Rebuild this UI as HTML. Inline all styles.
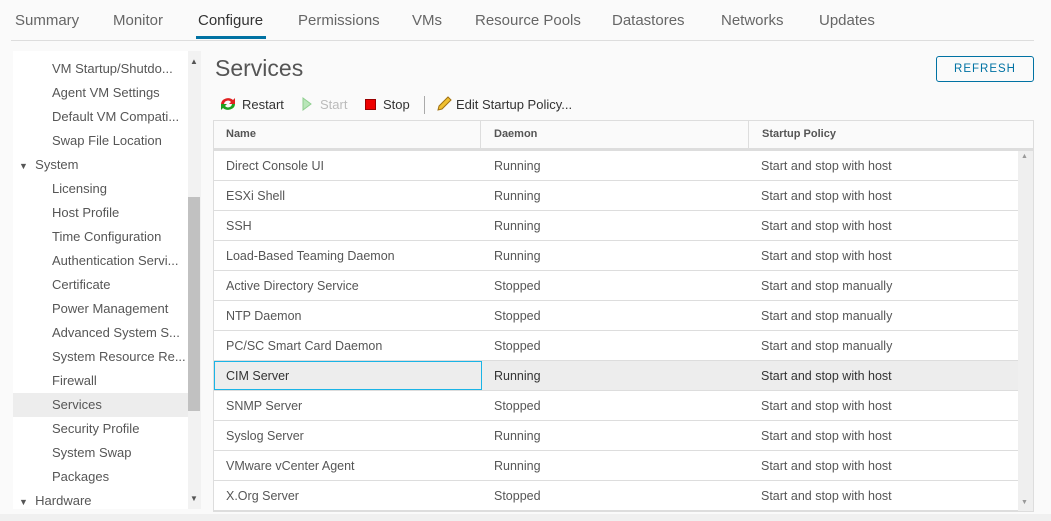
<!DOCTYPE html>
<html><head><meta charset="utf-8"><style>
*{margin:0;padding:0;box-sizing:border-box}
body{width:1051px;height:521px;background:#fafafa;font-family:"Liberation Sans",sans-serif;color:#565656;position:relative;overflow:hidden;font-size:13px}
.a{position:absolute;white-space:nowrap}
.tab{position:absolute;top:12px;font-size:15px;color:#666}
.si{position:absolute;left:52px;font-size:13px;color:#565656}
.row{position:absolute;left:214px;width:804px;height:30px;border-bottom:1px solid #ddd;background:#fff}
.row span{position:absolute;top:8px;font-size:12.5px;color:#565656}
</style></head><body>
<div class="tab" style="left:15px">Summary</div>
<div class="tab" style="left:113px">Monitor</div>
<div class="tab" style="left:198px;color:#333">Configure</div>
<div class="tab" style="left:298px">Permissions</div>
<div class="tab" style="left:412px">VMs</div>
<div class="tab" style="left:475px">Resource Pools</div>
<div class="tab" style="left:612px">Datastores</div>
<div class="tab" style="left:721px">Networks</div>
<div class="tab" style="left:819px">Updates</div>
<div class="a" style="left:196px;top:36px;width:70px;height:3px;background:#0072a3"></div>
<div class="a" style="left:11px;top:40px;width:1023px;height:1px;background:#ddd"></div>

<div class="a" style="left:13px;top:51px;width:188px;height:458px;background:#fff"></div>
<div class="a" style="left:188px;top:51px;width:13px;height:458px;background:#f2f2f2"></div>
<div class="a" style="left:188px;top:197px;width:12px;height:214px;background:#c1c1c1"></div>
<div class="a" style="left:190px;top:57px;font-size:8px;color:#555">▲</div>
<div class="a" style="left:190px;top:494px;font-size:8px;color:#555">▼</div>
<div class="a" style="left:13px;top:393px;width:175px;height:24px;background:#ededed"></div>
<div class="si" style="top:61px">VM Startup/Shutdo...</div>
<div class="si" style="top:85px">Agent VM Settings</div>
<div class="si" style="top:109px">Default VM Compati...</div>
<div class="si" style="top:133px">Swap File Location</div>
<div class="si" style="top:157px;left:19px"><span style="font-size:9px">▼</span>&nbsp;&nbsp;System</div>
<div class="si" style="top:181px">Licensing</div>
<div class="si" style="top:205px">Host Profile</div>
<div class="si" style="top:229px">Time Configuration</div>
<div class="si" style="top:253px">Authentication Servi...</div>
<div class="si" style="top:277px">Certificate</div>
<div class="si" style="top:301px">Power Management</div>
<div class="si" style="top:325px">Advanced System S...</div>
<div class="si" style="top:349px">System Resource Re...</div>
<div class="si" style="top:373px">Firewall</div>
<div class="si" style="top:397px">Services</div>
<div class="si" style="top:421px">Security Profile</div>
<div class="si" style="top:445px">System Swap</div>
<div class="si" style="top:469px">Packages</div>
<div class="si" style="top:493px;left:19px"><span style="font-size:9px">▼</span>&nbsp;&nbsp;Hardware</div>

<div class="a" style="left:215px;top:55px;font-size:23px;color:#555">Services</div>
<div class="a" style="left:936px;top:56px;width:98px;height:26px;border:1px solid #0072a3;border-radius:3px;color:#0072a3;font-size:11.5px;letter-spacing:1px;text-align:center;line-height:24px">REFRESH</div>

<svg class="a" style="left:219px;top:96px" width="18" height="16" viewBox="0 0 18 16"><path d="M2 8a7 6 0 0 1 12-4l2-2v6h-6l2-2a4 4 0 0 0-7 2z" fill="#e02020"/><path d="M16 8a7 6 0 0 1-12 4l-2 2V8h6l-2 2a4 4 0 0 0 7-2z" fill="#1fa01f"/></svg>
<div class="a" style="left:242px;top:97px;color:#333">Restart</div>
<svg class="a" style="left:302px;top:97px" width="10" height="14"><path d="M1 1L9 7L1 13Z" fill="#b9e6b9" stroke="#8fcf8f"/></svg>
<div class="a" style="left:320px;top:97px;color:#bbb">Start</div>
<div class="a" style="left:365px;top:99px;width:11px;height:11px;background:#e00;border:1px solid #900"></div>
<div class="a" style="left:383px;top:97px;color:#333">Stop</div>
<div class="a" style="left:424px;top:96px;width:1px;height:18px;background:#aaa"></div>
<svg class="a" style="left:436px;top:96px" width="16" height="16"><path d="M2 14L3 10L12 1L15 4L6 13Z" fill="#f0c030" stroke="#a07010"/></svg>
<div class="a" style="left:456px;top:97px;color:#333">Edit Startup Policy...</div>

<div class="a" style="left:213px;top:120px;width:821px;height:392px;border:1px solid #ddd;background:#fafafa"></div>
<div class="a" style="left:214px;top:148px;width:819px;height:3px;background:#ddd"></div>
<div class="a" style="left:480px;top:121px;width:1px;height:28px;background:#ddd"></div>
<div class="a" style="left:748px;top:121px;width:1px;height:28px;background:#ddd"></div>
<div class="a" style="left:226px;top:128px;font-size:11px;font-weight:bold;color:#555">Name</div>
<div class="a" style="left:494px;top:128px;font-size:11px;font-weight:bold;color:#555">Daemon</div>
<div class="a" style="left:762px;top:128px;font-size:11px;font-weight:bold;color:#555">Startup Policy</div>
<div class="a" style="left:1018px;top:151px;width:15px;height:360px;background:#efefef"></div>
<div class="a" style="left:1021px;top:153px;font-size:7px;color:#999">▲</div>
<div class="a" style="left:1021px;top:499px;font-size:7px;color:#999">▼</div>

<div class="row" style="top:151px"><span style="left:12px">Direct Console UI</span><span style="left:280px">Running</span><span style="left:547px">Start and stop with host</span></div>
<div class="row" style="top:181px"><span style="left:12px">ESXi Shell</span><span style="left:280px">Running</span><span style="left:547px">Start and stop with host</span></div>
<div class="row" style="top:211px"><span style="left:12px">SSH</span><span style="left:280px">Running</span><span style="left:547px">Start and stop with host</span></div>
<div class="row" style="top:241px"><span style="left:12px">Load-Based Teaming Daemon</span><span style="left:280px">Running</span><span style="left:547px">Start and stop with host</span></div>
<div class="row" style="top:271px"><span style="left:12px">Active Directory Service</span><span style="left:280px">Stopped</span><span style="left:547px">Start and stop manually</span></div>
<div class="row" style="top:301px"><span style="left:12px">NTP Daemon</span><span style="left:280px">Stopped</span><span style="left:547px">Start and stop manually</span></div>
<div class="row" style="top:331px"><span style="left:12px">PC/SC Smart Card Daemon</span><span style="left:280px">Stopped</span><span style="left:547px">Start and stop manually</span></div>
<div class="row" style="top:361px;background:#ededed"><div class="a" style="left:0;top:0;width:268px;height:29px;border:1px solid #1ab4e6"></div><span style="left:12px;color:#333">CIM Server</span><span style="left:280px;color:#333">Running</span><span style="left:547px;color:#333">Start and stop with host</span></div>
<div class="row" style="top:391px"><span style="left:12px">SNMP Server</span><span style="left:280px">Stopped</span><span style="left:547px">Start and stop with host</span></div>
<div class="row" style="top:421px"><span style="left:12px">Syslog Server</span><span style="left:280px">Running</span><span style="left:547px">Start and stop with host</span></div>
<div class="row" style="top:451px"><span style="left:12px">VMware vCenter Agent</span><span style="left:280px">Running</span><span style="left:547px">Start and stop with host</span></div>
<div class="row" style="top:481px"><span style="left:12px">X.Org Server</span><span style="left:280px">Stopped</span><span style="left:547px">Start and stop with host</span></div>
<div class="a" style="left:0;top:514px;width:1051px;height:7px;background:#f0f0f0"></div>
</body></html>
